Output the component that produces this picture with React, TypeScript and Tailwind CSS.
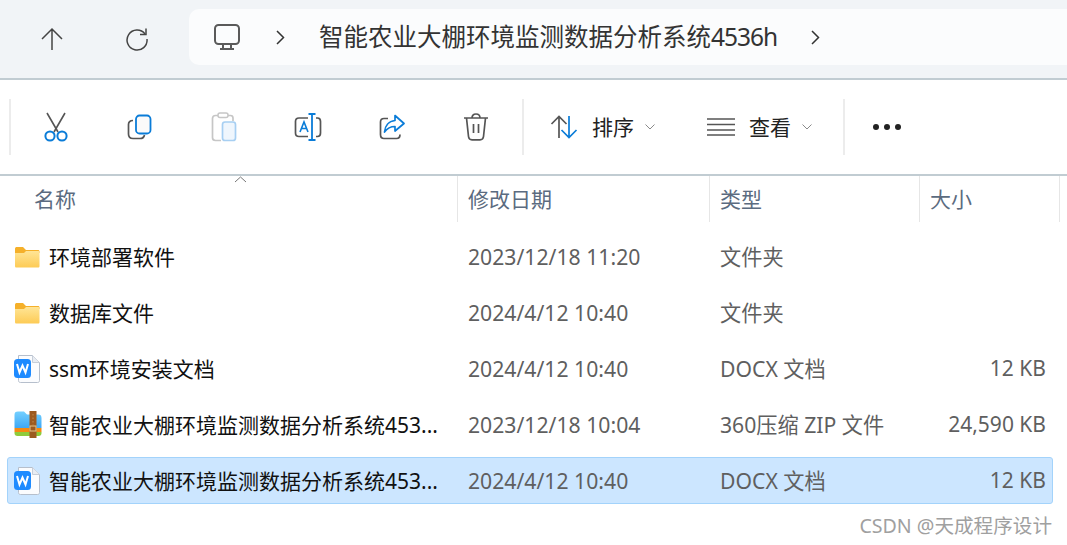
const fontStack = "font-['Noto_Sans','Noto_Sans_CJK_SC',sans-serif]";

function ScissorsIcon() {
  return (
    <svg width="26" height="30" viewBox="0 0 26 30" fill="none" strokeWidth="1.6">
      <path d="M4 1 L15 20 M22 1 L11 20" stroke="#555" />
      <circle cx="7" cy="24" r="4.6" stroke="#0a7cd8" strokeWidth="2" />
      <circle cx="19" cy="24" r="4.6" stroke="#0a7cd8" strokeWidth="2" />
    </svg>
  );
}

function CopyIcon() {
  return (
    <svg width="26" height="26" viewBox="0 0 26 26" fill="none">
      <path d="M6 6.5 C3 6.5 1.5 8 1.5 10.5 V20 C1.5 23 3 24.5 6 24.5 H13 C15.5 24.5 17 23.5 17.5 21" stroke="#555" strokeWidth="1.7" />
      <rect x="9" y="1.5" width="14.5" height="18" rx="3.5" fill="#fafafa" stroke="#0a7cd8" strokeWidth="1.8" />
    </svg>
  );
}

function PasteIcon() {
  return (
    <svg width="26" height="30" viewBox="0 0 26 30" fill="none">
      <path d="M7 3.5 H4.5 C2.5 3.5 1.5 4.5 1.5 6.5 V25.5 C1.5 27.5 2.5 28.5 4.5 28.5 H10 M17 3.5 H19.5 C21 3.5 22 4.5 22 6 V9" stroke="#c6c6c6" strokeWidth="1.7" />
      <rect x="7" y="1" width="10" height="4.5" rx="2" stroke="#c6c6c6" strokeWidth="1.5" fill="white" />
      <rect x="11.5" y="10" width="13" height="18.5" rx="2.5" fill="#eff6fd" stroke="#a7cff2" strokeWidth="1.7" />
    </svg>
  );
}

function RenameIcon() {
  return (
    <svg width="28" height="28" viewBox="0 0 28 28" fill="none">
      <path d="M14 5 H5 C2.5 5 1.5 6.5 1.5 8.5 V20 C1.5 22 2.5 23.5 5 23.5 H14 M22 5 H23.5 C25.5 5 26.5 6.5 26.5 8.5 V20 C26.5 22 25.5 23.5 23.5 23.5 H22" stroke="#555" strokeWidth="1.7" />
      <path d="M18 1 V27 M14.5 1 H21.5 M14.5 27 H21.5" stroke="#0a7cd8" strokeWidth="1.8" />
      <path d="M6 19 L10 9 L14 19 M7.5 15.5 H12.5" stroke="#0a7cd8" strokeWidth="1.6" />
    </svg>
  );
}

function ShareIcon() {
  return (
    <svg width="26" height="26" viewBox="0 0 26 26" fill="none">
      <path d="M9 4.5 H5 C2.5 4.5 1.5 6 1.5 8 V20.5 C1.5 23 2.5 24.5 5 24.5 H17.5 C20 24.5 21 23 21 20.5" stroke="#555" strokeWidth="1.7" />
      <path d="M16 1.5 L25 9.5 L16 17 V12.5 C11 12.5 8 14.5 5.5 18 C6 12 9.5 7 16 6.5 Z" stroke="#0a7cd8" strokeWidth="1.7" strokeLinejoin="round" fill="white" />
    </svg>
  );
}

function TrashIcon() {
  return (
    <svg width="26" height="28" viewBox="0 0 26 28" fill="none" stroke="#555" strokeWidth="1.7">
      <path d="M1 5 H25 M9 5 C9 2.5 10.5 1 13 1 C15.5 1 17 2.5 17 5" />
      <path d="M3.5 5 L5.5 23.5 C5.7 25.5 7 26.8 9 26.8 H17 C19 26.8 20.3 25.5 20.5 23.5 L22.5 5" />
      <path d="M10.5 11 V20 M15.5 11 V20" />
    </svg>
  );
}

function SortIcon() {
  return (
    <svg width="28" height="24" viewBox="0 0 28 24" fill="none" strokeWidth="1.7">
      <path d="M9 23 V1.5 M1.5 9 L9 1.5 L16.5 9" stroke="#555" />
      <path d="M19 1 V22.5 M11.5 15 L19 22.5 L26.5 15" stroke="#0a7cd8" />
    </svg>
  );
}

function Chevron() {
  return (
    <svg width="10" height="6" viewBox="0 0 10 6" fill="none" stroke="#8a8a8a" strokeWidth="1">
      <path d="M0.5 0.5 L5 5 L9.5 0.5" />
    </svg>
  );
}

function BreadcrumbArrow() {
  return (
    <svg width="9" height="15" viewBox="0 0 9 15" fill="none" stroke="#333" strokeWidth="1.5">
      <path d="M1 1 L7.5 7.5 L1 14" />
    </svg>
  );
}

function FolderIcon() {
  return (
    <svg width="26" height="22" viewBox="0 0 26 22">
      <defs>
        <linearGradient id="folderFill" x1="0" y1="0" x2="0" y2="1">
          <stop offset="0" stopColor="#ffe596" />
          <stop offset="1" stopColor="#fdcb55" />
        </linearGradient>
      </defs>
      <path d="M1 3 C1 1.5 1.7 1 3 1 H9 L12 4 H24 C25 4 25.5 4.6 25.5 5.5 V7 H1 Z" fill="#f5b02a" />
      <path d="M1 7 L10 7 L12 5 H24 C25 5 25.5 5.6 25.5 6.5 V20 C25.5 21 25 21.5 24 21.5 H2.5 C1.5 21.5 1 21 1 20 Z" fill="url(#folderFill)" />
    </svg>
  );
}

function WordIcon() {
  return (
    <svg width="26" height="28" viewBox="0 0 26 28">
      <path d="M4.5 0.5 H18.5 L25.5 7.5 V25.5 C25.5 26.8 24.8 27.5 23.5 27.5 H6.5 C5.2 27.5 4.5 26.8 4.5 25.5 Z" fill="#fbfcfe" stroke="#b6bfcc" />
      <path d="M18.5 0.5 V7.5 H25.5" fill="#e8ecf2" stroke="#c6ced9" />
      <rect x="0" y="4" width="17" height="19" rx="3.5" fill="#1e8bff" />
      <path d="M3 9 L5.5 17.5 L8.5 10.5 L11.5 17.5 L14 9" fill="none" stroke="white" strokeWidth="2" />
    </svg>
  );
}

function ZipIcon() {
  return (
    <svg width="28" height="27" viewBox="0 0 28 27">
      <defs>
        <linearGradient id="zipFill" x1="0" y1="0" x2="0" y2="1">
          <stop offset="0" stopColor="#74d0ff" />
          <stop offset="1" stopColor="#3fa8f5" />
        </linearGradient>
      </defs>
      <path d="M0.5 4 C0.5 1.5 1.5 0.5 4 0.5 H10 L13 3.500 H24 C26.500 3.500 27.500 4.500 27.500 7 V17 H0.500 Z" fill="url(#zipFill)" />
      <rect x="0.5" y="17" width="27" height="4" fill="#f58a12" />
      <path d="M0.5 21 H27.5 V22 C27.5 24 26.5 25 24.5 25 H3.5 C1.5 25 0.5 24 0.5 22 Z" fill="#8fcb3b" />
      <rect x="15.500" y="0" width="7" height="27" fill="#9c5a20" />
      <rect x="16" y="15" width="6" height="5" fill="none" stroke="#e6c58c" strokeWidth="1" />
      <path d="M19 3 V14" stroke="#c08a4a" strokeWidth="1" strokeDasharray="1.5 2" />
    </svg>
  );
}

const files = [
  { name: "环境部署软件", date: "2023/12/18 11:20", type: "文件夹", size: "", icon: <FolderIcon /> },
  { name: "数据库文件", date: "2024/4/12 10:40", type: "文件夹", size: "", icon: <FolderIcon /> },
  { name: "ssm环境安装文档", date: "2024/4/12 10:40", type: "DOCX 文档", size: "12 KB", icon: <WordIcon /> },
  { name: "智能农业大棚环境监测数据分析系统453...", date: "2023/12/18 10:04", type: "360压缩 ZIP 文件", size: "24,590 KB", icon: <ZipIcon /> },
  { name: "智能农业大棚环境监测数据分析系统453...", date: "2024/4/12 10:40", type: "DOCX 文档", size: "12 KB", icon: <WordIcon />, selected: true },
];

const toolIcons = [
  { key: "cut", icon: <ScissorsIcon /> },
  { key: "copy", icon: <CopyIcon /> },
  { key: "paste", icon: <PasteIcon /> },
  { key: "rename", icon: <RenameIcon /> },
  { key: "share", icon: <ShareIcon /> },
  { key: "delete", icon: <TrashIcon /> },
];

export default function App() {
  return (
    <div className={`relative w-[1067px] h-[545px] overflow-hidden bg-white ${fontStack}`}>
      {/* address bar */}
      <div className="h-[80px] bg-[#f1f4f7] border-b-2 border-[#c1ccd2] flex items-center">
        <div className="w-[102px] flex justify-center pl-[1px]">
          <svg width="22" height="24" viewBox="0 0 22 24" fill="none" stroke="#444" strokeWidth="1.5">
            <path d="M11 23 V2 M1 12 L11 2 L21 12" />
          </svg>
        </div>
        <div className="w-[68px] flex justify-center pl-[1px]">
          <svg width="24" height="24" viewBox="0 0 24 24" fill="none" stroke="#444" strokeWidth="1.5">
            <path d="M20 7 A10 10 0 1 0 22 12" />
            <path d="M21 1.5 V7.5 H15" />
          </svg>
        </div>
        <div className="ml-[19px] flex-1 h-[56px] mb-[4px] bg-[#fbfcfd] rounded-l-[10px] flex items-center">
          <div className="ml-[24px]">
            <svg width="28" height="28" viewBox="0 0 28 28" fill="none" stroke="#5a5a5a" strokeWidth="2">
              <rect x="2" y="2" width="24" height="19" rx="3.5" />
              <path d="M10 21 V26 M18 21 V26 M7 26 H21" />
            </svg>
          </div>
          <div className="ml-[35px] flex items-center"><BreadcrumbArrow /></div>
          <span className="ml-[34px] text-[24.5px] leading-none text-[#333] whitespace-nowrap">
            智能农业大棚环境监测数据分析系统<span className="tracking-[-1px]">4536h</span>
          </span>
          <div className="ml-[34px] flex items-center"><BreadcrumbArrow /></div>
        </div>
      </div>

      {/* command bar */}
      <div className="h-[96px] flex items-center border-b-2 border-[#c1ccd2]">
        <div className="ml-[9px] w-[2px] h-[56px] bg-[#ececec]" />
        {toolIcons.map((t, i) => (
          <div key={t.key} className={`w-[84px] flex justify-center ${i === 0 ? "ml-[3px]" : ""}`}>
            {t.icon}
          </div>
        ))}
        <div className="ml-[4px] w-[2px] h-[56px] bg-[#ececec]" />
        <div className="ml-[26px]"><SortIcon /></div>
        <span className="ml-[14px] text-[21px] leading-none text-[#222]">排序</span>
        <div className="ml-[11px]"><Chevron /></div>
        <div className="ml-[52px]">
          <svg width="28" height="18" viewBox="0 0 28 18" fill="none" stroke="#555" strokeWidth="1.6">
            <path d="M0 1 H28 M0 6.5 H28 M0 12 H28 M0 17 H28" />
          </svg>
        </div>
        <span className="ml-[14px] text-[21px] leading-none text-[#222]">查看</span>
        <div className="ml-[11px]"><Chevron /></div>
        <div className="ml-[31px] w-[2px] h-[56px] bg-[#ececec]" />
        <div className="ml-[28px] flex gap-[5px]">
          <div className="w-[6px] h-[6px] rounded-full bg-[#222]" />
          <div className="w-[6px] h-[6px] rounded-full bg-[#222]" />
          <div className="w-[6px] h-[6px] rounded-full bg-[#222]" />
        </div>
      </div>

      {/* column headers */}
      <div className="relative grid grid-cols-[458px_252px_210px_140px] h-[46px] text-[21px] text-[#5b6b80]">
        <svg className="absolute left-[234px] top-[0px]" width="13" height="7" viewBox="0 0 13 7" fill="none" stroke="#777" strokeWidth="1">
          <path d="M1 6 L6.5 1 L12 6" />
        </svg>
        <div className="pl-[34px] pt-[1px] border-r border-[#e6e6e6] flex items-center">名称</div>
        <div className="pl-[10px] pt-[1px] border-r border-[#e6e6e6] flex items-center">修改日期</div>
        <div className="pl-[10px] pt-[1px] border-r border-[#e6e6e6] flex items-center">类型</div>
        <div className="pl-[10px] pt-[1px] border-r border-[#e6e6e6] flex items-center">大小</div>
      </div>

      {/* file list */}
      <div className="pt-[11px] flex flex-col gap-[9px]">
        {files.map((f, i) => (
          <div
            key={i}
            className={`ml-[7px] w-[1046px] h-[47px] grid grid-cols-[451px_252px_210px_133px] items-center rounded-[3px] border ${
              f.selected ? "bg-[#cce6ff] border-[#a3d3fb]" : "border-transparent"
            }`}
          >
            <div className="flex items-center min-w-0">
              <div className="w-[41px] pl-[6px] flex items-center shrink-0">{f.icon}</div>
              <span className="pt-[1px] text-[21px] leading-none text-[#111] whitespace-nowrap">{f.name}</span>
            </div>
            <div className="pl-[9px] text-[21.2px] leading-none text-[#5f5f5f] whitespace-nowrap">{f.date}</div>
            <div className="pl-[9px] text-[21.2px] leading-none text-[#5f5f5f] whitespace-nowrap">{f.type}</div>
            <div className="pr-[8px] text-right text-[21px] leading-none text-[#5f5f5f] whitespace-nowrap">{f.size}</div>
          </div>
        ))}
      </div>

      {/* watermark */}
      <div className="absolute right-[15px] top-[514px] text-[19.6px] leading-[24px] text-[#a0a0a0] whitespace-nowrap">
        CSDN @天成程序设计
      </div>
    </div>
  );
}
